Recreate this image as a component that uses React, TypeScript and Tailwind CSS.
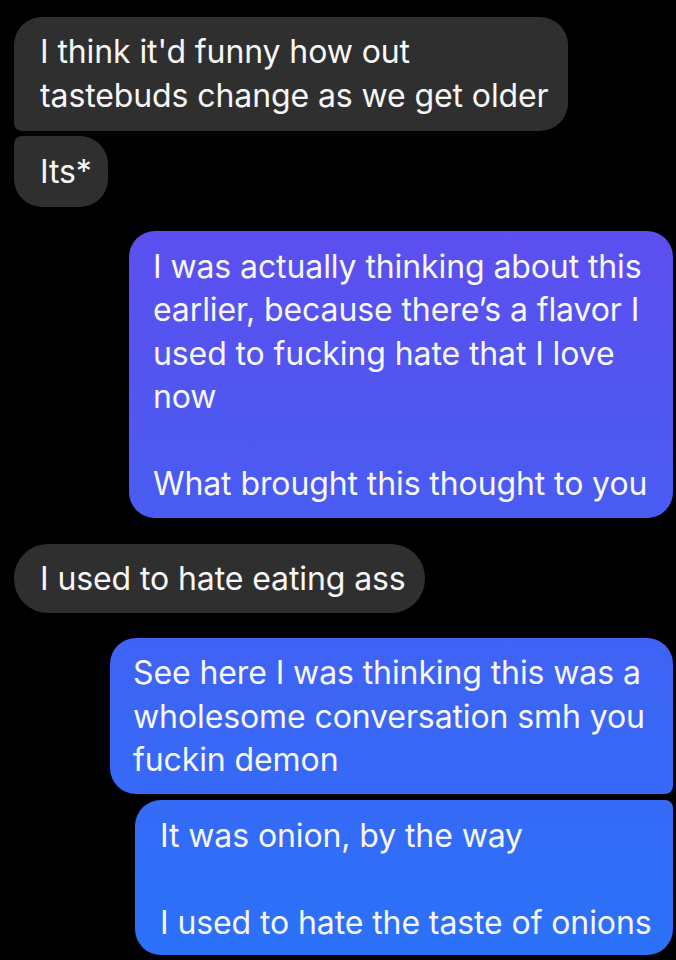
import React from "react";

type Msg = {
  side: "left" | "right";
  lines: string[];
  box: string;
};

const messages: Msg[] = [
  {
    side: "left",
    lines: ["I think it'd funny how out", "tastebuds change as we get older"],
    box: "ml-[14px] w-[554px] pl-[26px] pt-[13px] pb-[14px] rounded-[28px] rounded-bl-[8px]",
  },
  {
    side: "left",
    lines: ["Its*"],
    box: "ml-[14px] mt-[5px] w-[94px] pl-[26px] pt-[14px] pb-[13px] rounded-[28px] rounded-tl-[8px]",
  },
  {
    side: "right",
    lines: [
      "I was actually thinking about this",
      "earlier, because there’s a flavor I",
      "used to fucking hate that I love",
      "now",
      "",
      "What brought this thought to you",
    ],
    box: "mt-[24px] w-[544px] pl-[24px] pt-[14px] pb-[12px] rounded-[26px]",
  },
  {
    side: "left",
    lines: ["I used to hate eating ass"],
    box: "ml-[14px] mt-[26px] w-[411px] pl-[26px] pt-[13px] pb-[13px] rounded-[34px]",
  },
  {
    side: "right",
    lines: [
      "See here I was thinking this was a",
      "wholesome conversation smh you",
      "fuckin demon",
    ],
    box: "mt-[25px] w-[563px] pl-[23px] pt-[13px] pb-[12px] rounded-[26px] rounded-br-[8px]",
  },
  {
    side: "right",
    lines: ["It was onion, by the way", "", "I used to hate the taste of onions"],
    box: "mt-[6px] w-[538px] pl-[25px] pt-[14px] pb-[11px] rounded-[26px] rounded-tr-[8px]",
  },
];

const Bubble: React.FC<{ msg: Msg }> = ({ msg }) => {
  const color =
    msg.side === "left"
      ? "self-start bg-[#2f2f30]"
      : "self-end mr-[3px] bg-fixed bg-[linear-gradient(180deg,#6c43ec_0px,#2a72f8_960px)]";
  return (
    <div className={`${color} ${msg.box} text-[#f7f7f7]`}>
      {msg.lines.map((line, i) => (
        <div key={i} className="h-[43.5px] whitespace-nowrap">
          {line || "\u00a0"}
        </div>
      ))}
    </div>
  );
};

export default function App() {
  return (
    <div
      className="h-[960px] w-[676px] overflow-hidden bg-black pt-[17px] flex flex-col text-[32px] leading-[43.5px] tracking-[-0.1px]"
      style={{ fontFamily: "Inter, 'Liberation Sans', sans-serif" }}
    >
      {messages.map((m, i) => (
        <Bubble key={i} msg={m} />
      ))}
    </div>
  );
}
